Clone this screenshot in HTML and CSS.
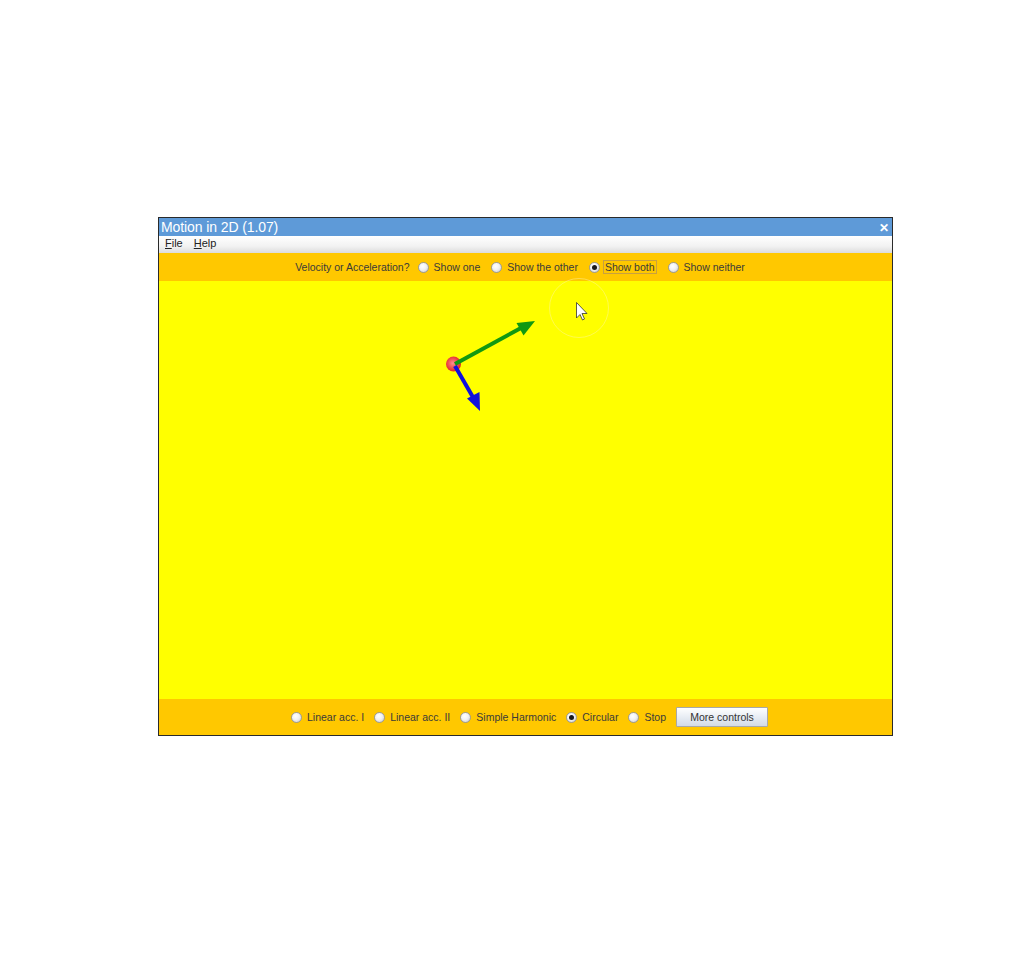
FILE: index.html
```html
<!DOCTYPE html>
<html>
<head>
<meta charset="utf-8">
<link rel="stylesheet" href="styles.css">
</head>
<body>
<div class="window">
  <div class="titlebar">
    <span class="title">Motion in 2D (1.07)</span>
    <span class="close">&#x2715;</span>
  </div>
  <div class="menubar">
    <span class="menu"><u>F</u>ile</span>
    <span class="menu"><u>H</u>elp</span>
  </div>
  <div class="panel top-panel">
    <span class="label">Velocity or Acceleration?</span>
    <label class="radio"><span class="dot"></span>Show one</label>
    <label class="radio"><span class="dot"></span>Show the other</label>
    <label class="radio checked focused"><span class="dot"></span><span class="focus">Show both</span></label>
    <label class="radio"><span class="dot"></span>Show neither</label>
  </div>
  <div class="canvas">
    <svg class="scene" width="733" height="418" viewBox="0 0 733 418">
      <defs>
        <radialGradient id="ball" cx="0.45" cy="0.45" r="0.6">
          <stop offset="0" stop-color="#ff9090"/>
          <stop offset="1" stop-color="#e01818"/>
        </radialGradient>
      </defs>
      <circle cx="294.5" cy="83" r="7.5" fill="url(#ball)"/>
      <line x1="296" y1="83" x2="362" y2="47" stroke="#119911" stroke-width="4"/>
      <polygon points="376,40 357.5,42 364.5,54.5" fill="#119911"/>
      <line x1="296" y1="85" x2="315" y2="118" stroke="#1010dd" stroke-width="4"/>
      <polygon points="321,130 308,117.5 320.5,111" fill="#1010dd"/>
      <path d="M417.5 21.5 L417.5 37 L421 33.5 L423.5 39 L425.5 38 L423 32.5 L428 32.5 Z" fill="#fff" stroke="#333" stroke-width="0.8" stroke-linejoin="round"/>
    </svg>
  </div>
  <div class="panel bottom-panel">
    <label class="radio"><span class="dot"></span>Linear acc. I</label>
    <label class="radio"><span class="dot"></span>Linear acc. II</label>
    <label class="radio"><span class="dot"></span>Simple Harmonic</label>
    <label class="radio checked"><span class="dot"></span>Circular</label>
    <label class="radio"><span class="dot"></span>Stop</label>
    <button class="btn">More controls</button>
  </div>
  <div class="halo"></div>
</div>
</body>
</html>
```

FILE: styles.css
```css
html, body {
  margin: 0;
  padding: 0;
  background: #ffffff;
}

body {
  font-family: "Liberation Sans", Arial, sans-serif;
  padding-top: 217px;
  padding-left: 158px;
}

.window {
  position: relative;
  width: 733px;
  border: 1px solid #2a2a2a;
  display: flex;
  flex-direction: column;
  background: #ffc800;
}

.titlebar {
  height: 18px;
  background: #5e9ad8;
  display: flex;
  align-items: center;
  justify-content: space-between;
  padding: 0 3px 0 2px;
  color: #ffffff;
}

.title {
  font-size: 14px;
  line-height: 18px;
  letter-spacing: -0.1px;
}

.close {
  font-size: 12px;
  font-weight: bold;
  line-height: 18px;
  margin-top: 2px;
}

.menubar {
  height: 17px;
  box-sizing: border-box;
  padding-bottom: 3px;
  background: linear-gradient(#ffffff, #f2f2f2 60%, #dcdcdc);
  display: flex;
  align-items: center;
  gap: 11px;
  padding-left: 6px;
  font-size: 11px;
  color: #222;
}

.menu u {
  text-decoration-thickness: 1px;
  text-underline-offset: 1px;
}

.panel {
  background: #ffc800;
  display: flex;
  align-items: center;
  justify-content: center;
  font-size: 10.5px;
  color: #3a3a3a;
}

.top-panel {
  height: 28px;
}

.top-panel .label {
  margin-right: 8px;
}

.radio {
  display: inline-flex;
  align-items: center;
  margin-right: 11px;
}

.radio .dot {
  width: 9px;
  height: 9px;
  border-radius: 50%;
  border: 1px solid #9a9a9a;
  background: radial-gradient(circle at 40% 35%, #ffffff 0%, #f2f2f2 45%, #c8c8c8 100%);
  margin-right: 5px;
  position: relative;
  flex: none;
}

.radio.checked .dot::after {
  content: "";
  position: absolute;
  left: 2px;
  top: 2px;
  width: 5px;
  height: 5px;
  border-radius: 50%;
  background: #1a1a1a;
}

.focus {
  border: 1px solid #c8a040;
  padding: 0 1px;
  margin-left: -2px;
}

.canvas {
  height: 418px;
  background: #ffff00;
  position: relative;
}

.scene {
  display: block;
}

.bottom-panel {
  height: 36px;
  padding-left: 8px;
}

.bottom-panel .radio {
  margin-right: 10px;
}

.btn {
  font-family: "Liberation Sans", Arial, sans-serif;
  font-size: 10.5px;
  color: #333;
  width: 92px;
  height: 20px;
  margin-left: 0;
  border: 1px solid #a8a8a8;
  border-radius: 1px;
  background: linear-gradient(#ffffff, #e8edf4 50%, #d3dbe6);
  padding: 0;
}

.halo {
  position: absolute;
  left: 390px;
  top: 60px;
  width: 58px;
  height: 58px;
  border-radius: 50%;
  border: 1px solid rgba(255, 245, 170, 0.45);
  pointer-events: none;
}
```
